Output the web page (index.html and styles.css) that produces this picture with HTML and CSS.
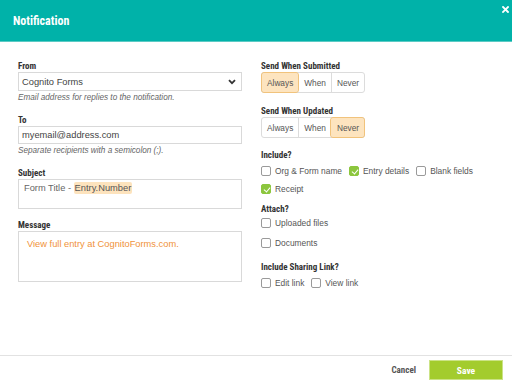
FILE: index.html
```html
<!DOCTYPE html>
<html>
<head>
<meta charset="utf-8">
<link rel="stylesheet" href="styles.css">
</head>
<body>
<div class="dialog">
  <header class="head">
    <h1 class="title">Notification</h1>
    <span class="close" aria-label="Close">
      <svg width="7" height="7" viewBox="0 0 7 7"><path d="M1 1L6 6M6 1L1 6" stroke="#fff" stroke-width="1.8" stroke-linecap="square"/></svg>
    </span>
  </header>
  <main class="body">
    <section class="col-left">
      <div class="field">
        <label class="lbl">From</label>
        <div class="select">
          <span>Cognito Forms</span>
          <svg width="8" height="6" viewBox="0 0 8 6"><path d="M1 1.2L4 4.2L7 1.2" fill="none" stroke="#333" stroke-width="1.8"/></svg>
        </div>
        <p class="help">Email address for replies to the notification.</p>
      </div>
      <div class="field">
        <label class="lbl">To</label>
        <div class="input">myemail@address.com</div>
        <p class="help">Separate recipients with a semicolon (;).</p>
      </div>
      <div class="field">
        <label class="lbl">Subject</label>
        <div class="input subject"><span class="plain">Form Title - </span><span class="token">Entry.Number</span></div>
      </div>
      <div class="field">
        <label class="lbl">Message</label>
        <div class="input message"><span class="link">View full entry at CognitoForms.com.</span></div>
      </div>
    </section>
    <section class="col-right">
      <div class="group">
        <label class="lbl">Send When Submitted</label>
        <div class="seg">
          <span class="opt on">Always</span><span class="opt">When</span><span class="opt">Never</span>
        </div>
      </div>
      <div class="group g2">
        <label class="lbl">Send When Updated</label>
        <div class="seg">
          <span class="opt">Always</span><span class="opt">When</span><span class="opt on">Never</span>
        </div>
      </div>
      <div class="group g3">
        <label class="lbl">Include?</label>
        <div class="checks inc">
          <div class="row">
            <span class="chk"><i class="box"></i>Org &amp; Form name</span>
            <span class="chk"><i class="box on"></i>Entry details</span>
            <span class="chk"><i class="box"></i>Blank fields</span>
          </div>
          <div class="row">
            <span class="chk"><i class="box on"></i>Receipt</span>
          </div>
        </div>
      </div>
      <div class="group g4">
        <label class="lbl">Attach?</label>
        <div class="checks att">
          <div class="row"><span class="chk"><i class="box"></i>Uploaded files</span></div>
          <div class="row"><span class="chk"><i class="box"></i>Documents</span></div>
        </div>
      </div>
      <div class="group g5">
        <label class="lbl">Include Sharing Link?</label>
        <div class="checks">
          <div class="row">
            <span class="chk"><i class="box"></i>Edit link</span>
            <span class="chk"><i class="box"></i>View link</span>
          </div>
        </div>
      </div>
    </section>
  </main>
  <footer class="foot">
    <span class="cancel">Cancel</span>
    <span class="save">Save</span>
  </footer>
</div>
</body>
</html>
```
FILE: styles.css
```css
* { box-sizing: border-box; }
html, body { margin: 0; padding: 0; background: #fff; }
body {
  width: 512px;
  height: 384px;
  overflow: hidden;
  font-family: "Liberation Sans", Arial, sans-serif;
  color: #555;
}
.dialog { display: flex; flex-direction: column; height: 384px; }
.head {
  height: 42px;
  background: #00b2a9;
  border-bottom: 1px solid #5ccac4;
  display: flex;
  align-items: flex-start;
  justify-content: space-between;
  padding: 0 3px 0 13px;
}
.title {
  margin: 14px 0 0;
  font-family: "Liberation Sans Narrow", "Roboto Condensed", "Lato", sans-serif;
  font-weight: bold;
  font-size: 12px;
  line-height: 14px;
  color: #fff;
}
.close { margin-top: 6px; display: flex; }
.body {
  flex: 1;
  display: flex;
  padding: 18px 0 0 18px;
  border-bottom: 1px solid #e2e2e2;
}
.col-left { width: 224px; display: flex; flex-direction: column; gap: 10px; }
.col-right { margin-left: 19px; width: 240px; display: flex; flex-direction: column; }
.lbl {
  display: block;
  font-family: "Liberation Sans Narrow", "Roboto Condensed", "Lato", sans-serif;
  font-weight: bold;
  font-size: 9px;
  line-height: 12px;
  color: #333;
}
.select, .input {
  border: 1px solid #d9d9d9;
  font-size: 9.3px;
  color: #444;
  padding: 0 5px 0 3px;
}
.select {
  height: 19px;
  display: flex;
  align-items: center;
  justify-content: space-between;
}
.input { height: 18px; line-height: 16px; }
.help {
  margin: 1px 0 0;
  font-size: 8.2px;
  line-height: 12px;
  font-style: italic;
  color: #666;
}
.subject { height: 30px; padding: 2px 5px; line-height: 13px; }
.plain { color: #666; }
.token { background: #fde3bd; border-radius: 2px; padding: 1px 1px; color: #555; }
.message { height: 51px; padding: 6px 8px; line-height: 12px; }
.link { color: #f0923a; }
.seg {
  display: inline-flex;
  border: 1px solid #dcdcdc;
  border-radius: 3px;
  height: 21px;
  align-self: flex-start;
}
.group { display: flex; flex-direction: column; }
.opt {
  display: flex;
  align-items: center;
  padding: 0 5px;
  font-size: 8.3px;
  color: #555;
  border-left: 1px solid #dcdcdc;
}
.opt:first-child { border-left: 0; }
.opt.on {
  background: #fde4bf;
  outline: 1px solid #f1c37c;
  border-radius: 2px;
  border-left-color: transparent;
}
.opt.on + .opt { border-left-color: transparent; }
.g2 { margin-top: 12px; }
.g3 { margin-top: 11px; }
.g4 { margin-top: 7px; }
.g5 { margin-top: 11px; }
.checks { display: flex; flex-direction: column; gap: 4px; margin-top: 3px; }
.att { gap: 6px; margin-top: 1px; }
.row { display: flex; gap: 7px; height: 14px; align-items: center; }
.chk {
  display: flex;
  align-items: center;
  gap: 4px;
  font-size: 8.4px;
  color: #555;
}
.box {
  width: 10px;
  height: 10px;
  border: 1px solid #9a9a9a;
  border-radius: 2px;
  background: #fff;
  display: inline-block;
  position: relative;
}
.box.on { background: #8cc63e; border-color: #8cc63e; }
.box.on::after {
  content: "";
  position: absolute;
  left: 2.5px;
  top: 0.5px;
  width: 3px;
  height: 5px;
  border: solid #fff;
  border-width: 0 1.6px 1.6px 0;
  transform: rotate(40deg);
}
.foot {
  height: 28px;
  display: flex;
  align-items: center;
  justify-content: flex-end;
  padding: 0 9px 0 0;
}
.cancel {
  font-family: "Liberation Sans Narrow", "Roboto Condensed", "Lato", sans-serif;
  font-weight: bold;
  font-size: 9px;
  color: #555;
  margin-right: 13px;
}
.save {
  width: 74px;
  height: 20px;
  background: #a3cc2d;
  border: 1px solid #cbe386;
  color: #fff;
  font-family: "Liberation Sans Narrow", "Roboto Condensed", "Lato", sans-serif;
  font-weight: bold;
  font-size: 9.5px;
  display: flex;
  align-items: center;
  justify-content: center;
}
```
